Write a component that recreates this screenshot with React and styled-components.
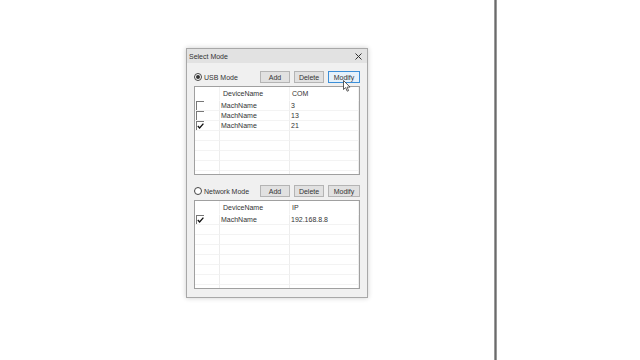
import React from "react";
import styled, { createGlobalStyle } from "styled-components";

const Global = createGlobalStyle`
  html, body { margin: 0; padding: 0; background: #ffffff; }
  body { font-family: "Liberation Sans", Arial, sans-serif; overflow: hidden; }
  * { box-sizing: border-box; }
`;

const Page = styled.div`
  display: flex;
  align-items: flex-start;
  width: 640px;
  height: 360px;
  background: #fff;
`;

const Dialog = styled.div`
  position: relative;
  margin: 48px 0 0 186px;
  width: 182px;
  height: 250px;
  border: 1px solid #a8a8a8;
  background: #f0f0f0;
  box-shadow: 0 0 5px rgba(0, 0, 0, 0.2);
  display: flex;
  flex-direction: column;
`;

const TitleBar = styled.div`
  height: 14px;
  background: #e2e2e2;
  display: flex;
  align-items: center;
  justify-content: space-between;
  padding: 0 5px 0 2px;
  font-size: 7px;
  color: #333;
`;

const Body = styled.div`
  flex: 1;
  display: flex;
  flex-direction: column;
  padding: 8px 7px 7px 7px;
`;

const ModeRow = styled.div`
  display: flex;
  align-items: center;
  height: 12px;
  margin-top: ${(p) => p.$top || 0}px;
`;

const Radio = styled.span`
  width: 8px;
  height: 8px;
  border-radius: 50%;
  border: 1px solid #444;
  background: #fff;
  display: flex;
  align-items: center;
  justify-content: center;
  margin-right: 2px;
  &::after {
    content: "";
    width: 4px;
    height: 4px;
    border-radius: 50%;
    background: ${(p) => (p.$checked ? "#333" : "transparent")};
  }
`;

const ModeLabel = styled.span`
  font-size: 7px;
  color: #333;
  flex: 1;
`;

const Buttons = styled.div`
  display: flex;
  gap: 4px;
`;

const Button = styled.div`
  width: ${(p) => p.$w || 30}px;
  height: 12px;
  border: 1px solid ${(p) => (p.$hover ? "#3c8fd8" : "#b4b4b4")};
  background: ${(p) => (p.$hover ? "#e5f1fb" : "#e1e1e1")};
  font-size: 7px;
  color: #333;
  display: flex;
  align-items: center;
  justify-content: center;
`;

const List = styled.div`
  margin-top: 3px;
  height: 89px;
  border: 1px solid #a0a0a0;
  background: #fff;
  overflow: hidden;
`;

const Row = styled.div`
  display: grid;
  grid-template-columns: 25px 70px 1fr;
  height: ${(p) => (p.$header ? 14 : 10)}px;
`;

const Cell = styled.div`
  font-size: 7px;
  color: #333;
  display: flex;
  align-items: center;
  padding-left: ${(p) => p.$pad ?? 2}px;
  border-right: 1px solid ${(p) => (p.$header ? "#f2f2f2" : "#ededed")};
  border-bottom: 1px solid ${(p) => (p.$header ? "#ffffff" : "#f3f3f3")};
  white-space: nowrap;
`;

const Check = styled.span`
  width: 8px;
  height: 9px;
  border-left: 1px solid #777;
  border-top: 1px solid #777;
  display: flex;
  align-items: center;
  justify-content: center;
`;

const Divider = styled.div`
  margin-left: 126px;
  width: 3px;
  height: 360px;
  background: #6b6b6b;
  border-left: 1px solid #9a9a9a;
  border-right: 1px solid #9a9a9a;
`;

const Cursor = styled.svg`
  position: absolute;
  left: 156px;
  top: 31px;
`;

const CloseIcon = () => (
  <svg width="7" height="7" viewBox="0 0 7 7">
    <path d="M0.5 0.5 L6.5 6.5 M6.5 0.5 L0.5 6.5" stroke="#333" strokeWidth="1" />
  </svg>
);

const Tick = () => (
  <svg width="7" height="6" viewBox="0 0 7 6">
    <path d="M0.8 3 L2.6 5 L6.4 0.6" stroke="#111" strokeWidth="1.3" fill="none" />
  </svg>
);

function DeviceList({ valueHeader, rows }) {
  const filler = Array.from({ length: 9 - rows.length });
  return (
    <List>
      <Row $header>
        <Cell $header />
        <Cell $header $pad={3}>DeviceName</Cell>
        <Cell $header $pad={2}>{valueHeader}</Cell>
      </Row>
      {rows.map((r, i) => (
        <Row key={i}>
          <Cell $pad={1}>
            <Check>{r.checked ? <Tick /> : null}</Check>
          </Cell>
          <Cell $pad={1}>{r.name}</Cell>
          <Cell $pad={1}>{r.value}</Cell>
        </Row>
      ))}
      {filler.map((_, i) => (
        <Row key={"f" + i}>
          <Cell />
          <Cell />
          <Cell />
        </Row>
      ))}
    </List>
  );
}

function ModeHeader({ label, checked, hover, top }) {
  return (
    <ModeRow $top={top}>
      <Radio $checked={checked} />
      <ModeLabel>{label}</ModeLabel>
      <Buttons>
        <Button>Add</Button>
        <Button>Delete</Button>
        <Button $w={32} $hover={hover}>Modify</Button>
      </Buttons>
    </ModeRow>
  );
}

export default function App() {
  return (
    <>
      <Global />
      <Page>
        <Dialog>
          <TitleBar>
            <span>Select Mode</span>
            <CloseIcon />
          </TitleBar>
          <Body>
            <ModeHeader label="USB Mode" checked hover />
            <DeviceList
              valueHeader="COM"
              rows={[
                { name: "MachName", value: "3" },
                { name: "MachName", value: "13" },
                { name: "MachName", value: "21", checked: true },
              ]}
            />
            <ModeHeader label="Network Mode" top={10} />
            <DeviceList
              valueHeader="IP"
              rows={[{ name: "MachName", value: "192.168.8.8", checked: true }]}
            />
          </Body>
          <Cursor width="8" height="12" viewBox="0 0 8 12">
            <path d="M0.5 0.5 L0.5 9.5 L2.6 7.6 L4.2 11.2 L5.6 10.6 L4.1 7.1 L7 7.1 Z" fill="#fff" stroke="#333" strokeWidth="0.8" />
          </Cursor>
        </Dialog>
        <Divider />
      </Page>
    </>
  );
}
